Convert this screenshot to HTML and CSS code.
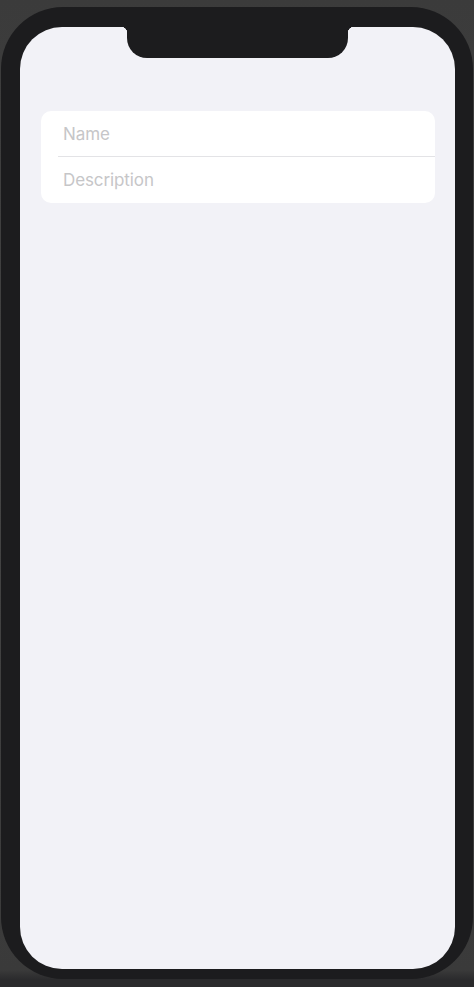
FILE: index.html
```html
<!DOCTYPE html>
<html>
<head>
<meta charset="utf-8">
<link rel="stylesheet" href="styles.css">
</head>
<body>
<div class="device">
  <div class="screen">
    <div class="notch"></div>
    <div class="card">
      <div class="row"><span class="placeholder">Name</span></div>
      <div class="divider"></div>
      <div class="row row-last"><span class="placeholder">Description</span></div>
    </div>
  </div>
</div>
</body>
</html>
```
FILE: styles.css
```css
html, body {
  margin: 0;
  padding: 0;
  height: 987px;
  overflow: hidden;
}
body {
  background: linear-gradient(to bottom, #3b3b3b 0px, #444444 500px, #3a3a3a 970px, #2a2a2c 980px);
  font-family: Inter, "Liberation Sans", sans-serif;
}
.device {
  margin: 7px 1px 0 1px;
  height: 972px;
  box-sizing: border-box;
  background: #1c1c1e;
  border-radius: 62px;
  padding: 20px 18px 10px 19px;
}
.screen {
  position: relative;
  height: 100%;
  box-sizing: border-box;
  background: #f2f2f7;
  border-radius: 42px;
  padding: 84px 20px 0 21px;
}
.notch {
  position: absolute;
  top: 0;
  left: 107px;
  width: 221px;
  height: 31px;
  background: #1c1c1e;
  border-radius: 0 0 20px 20px;
}
.notch::before,
.notch::after {
  content: "";
  position: absolute;
  top: 0;
  width: 6px;
  height: 6px;
}
.notch::before {
  left: -6px;
  background: radial-gradient(circle at 0 100%, transparent 6px, #1c1c1e 6.5px);
}
.notch::after {
  right: -6px;
  background: radial-gradient(circle at 100% 100%, transparent 6px, #1c1c1e 6.5px);
}
.card {
  background: #ffffff;
  border-radius: 10px;
  overflow: hidden;
}
.row {
  height: 45px;
  display: flex;
  align-items: center;
  padding-left: 22px;
}
.row-last {
  height: 46px;
}
.placeholder {
  font-size: 17px;
  color: #c6c6c8;
  letter-spacing: -0.1px;
}
.divider {
  height: 1px;
  margin-left: 17px;
  background: #e3e3e6;
}
```
